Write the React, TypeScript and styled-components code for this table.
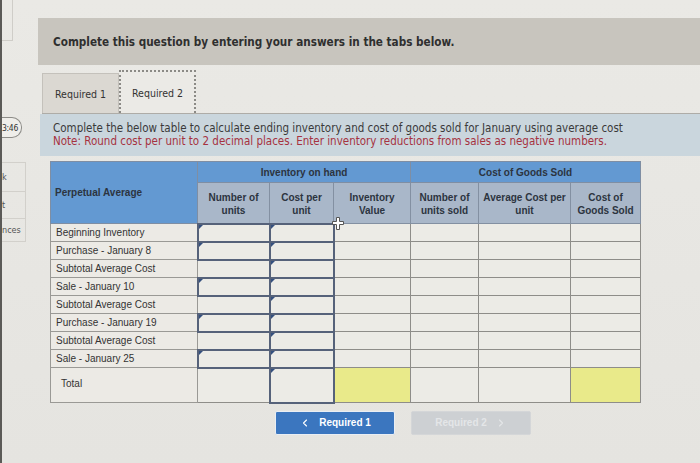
import React from "react";
import styled, { createGlobalStyle } from "styled-components";
import { ChevronLeft, ChevronRight } from "lucide-react";

const GlobalStyle = createGlobalStyle`
  html, body {
    margin: 0;
    padding: 0;
    background: #e8e7e3;
  }
  body {
    font-family: "DejaVu Sans Condensed", "DejaVu Sans", sans-serif;
    color: #333;
  }
`;

const Page = styled.div`
  width: 700px;
  height: 463px;
  display: flex;
  overflow: hidden;
  background: linear-gradient(180deg, #eae9e5 0%, #e5e4e0 100%);
`;

const Sidebar = styled.div`
  width: 38px;
  flex-shrink: 0;
  display: flex;
  flex-direction: column;
  border-left: 2px solid #5b5a57;
  box-sizing: border-box;
`;

const TopStub = styled.div`
  width: 10px;
  height: 40px;
  border: 1px solid #cfcdc8;
  border-left: none;
  border-top: none;
`;

const TimeBadge = styled.div`
  margin-top: 76px;
  width: 20px;
  height: 21px;
  border: 1px solid #8d8c88;
  border-left: none;
  border-radius: 0 10px 10px 0;
  display: flex;
  align-items: center;
  justify-content: flex-end;
  padding-right: 3px;
  box-sizing: border-box;
  font-size: 8.5px;
  letter-spacing: -0.3px;
  color: #333;
  background: #efeeea;
`;

const NavList = styled.div`
  margin-top: 24px;
  width: 23px;
  border: 1px solid #d2d0cb;
  border-left: none;
  display: flex;
  flex-direction: column;
`;

const NavItem = styled.div<{ $h: number }>`
  height: ${(p) => p.$h}px;
  display: flex;
  align-items: center;
  font-size: 9px;
  color: #555;
  white-space: nowrap;
  border-top: 1px solid #d2d0cb;
  &:first-child {
    border-top: none;
  }
`;

const Main = styled.div`
  flex: 1;
  display: flex;
  flex-direction: column;
  padding-top: 18px;
  position: relative;
`;

const TitleBar = styled.div`
  height: 47px;
  background: #c8c5be;
  display: flex;
  align-items: center;
  padding-left: 15px;
  font-weight: bold;
  font-size: 11.65px;
  color: #2f2f2f;
`;

const TabStrip = styled.div`
  margin-top: 5px;
  margin-left: 4px;
  display: flex;
  align-items: flex-end;
  height: 43px;
  border-bottom: 1px solid #aeaca7;
`;

const Tab = styled.div<{ $active?: boolean }>`
  height: ${(p) => (p.$active ? "43px" : "40px")};
  padding: 0 ${(p) => (p.$active ? "11px" : "12px")};
  display: flex;
  align-items: center;
  font-size: 10.5px;
  color: #333;
  box-sizing: border-box;
  background: ${(p) => (p.$active ? "#ebeae6" : "#dbd8d2")};
  border: ${(p) => (p.$active ? "2px dotted #8b8a86" : "1px solid #c4c1bb")};
  border-bottom: none;
`;

const Instructions = styled.div`
  margin-left: 2px;
  height: 42px;
  background: #cad6dd;
  padding: 8px 0 0 13px;
  box-sizing: border-box;
  font-size: 11.5px;
  line-height: 13px;
  color: #3a3a3a;
  white-space: nowrap;
`;

const Note = styled.div`
  color: #a6323f;
`;

const Table = styled.table`
  margin-top: 5px;
  margin-left: 12px;
  border-collapse: collapse;
  table-layout: fixed;
  width: 590px;
  font-family: "Liberation Sans", Arial, sans-serif;
  font-size: 10px;
`;

const GroupHead = styled.th`
  height: 20px;
  background: #6399d2;
  color: #2c3440;
  font-weight: bold;
  border: 1px solid #7f8ea3;
  padding: 0;
`;

const CornerHead = styled.th`
  background: #6399d2;
  color: #2c3440;
  text-align: left;
  padding: 0 0 0 4px;
  font-weight: bold;
  border: 1px solid #7f8ea3;
`;

const SubHead = styled.th`
  height: 41px;
  background: #a9b7c9;
  color: #2c3440;
  font-weight: bold;
  line-height: 13px;
  border: 1px solid #8390a2;
  padding: 2px 0 0;
  box-sizing: border-box;
`;

const Row = styled.tr<{ $tall?: boolean }>`
  height: ${(p) => (p.$tall ? "35px" : "18px")};
`;

const Label = styled.td<{ $tall?: boolean }>`
  background: #eceae5;
  border: 1px solid #9a9995;
  padding: ${(p) => (p.$tall ? "0 0 4px 10px" : "0 0 0 5px")};
  color: #333;
  white-space: nowrap;
`;

const Cell = styled.td<{ $input?: boolean; $yellow?: boolean }>`
  position: relative;
  background: ${(p) => (p.$yellow ? "#e9ea8a" : "#ecebe6")};
  border: ${(p) => (p.$input ? "2px solid #56627a" : "1px solid #8e8d89")};
  padding: 0;
  &::before {
    content: "";
    display: ${(p) => (p.$input ? "block" : "none")};
    position: absolute;
    left: 0;
    top: 0;
    border-top: 4px solid #35507e;
    border-right: 4px solid transparent;
  }
`;

const Buttons = styled.div`
  margin-top: 7px;
  padding-left: 237px;
  display: flex;
  gap: 16px;
`;

const NavButton = styled.div<{ $disabled?: boolean }>`
  width: 118px;
  height: 22px;
  display: flex;
  align-items: center;
  justify-content: center;
  gap: 8px;
  font-family: "Liberation Sans", Arial, sans-serif;
  font-weight: bold;
  font-size: 10px;
  color: ${(p) => (p.$disabled ? "#e4e6e8" : "#ffffff")};
  background: ${(p) => (p.$disabled ? "#cdd0d3" : "#3b76bf")};
  border: 1px solid ${(p) => (p.$disabled ? "#d4d6d8" : "#e9eef4")};
  border-radius: 2px;
`;

const Cursor = styled.svg`
  position: absolute;
  left: 294px;
  top: 217px;
`;

const rows = [
  { label: "Beginning Inventory", units: true },
  { label: "Purchase - January 8", units: true },
  { label: "Subtotal Average Cost", units: false },
  { label: "Sale - January 10", units: true },
  { label: "Subtotal Average Cost", units: false },
  { label: "Purchase - January 19", units: true },
  { label: "Subtotal Average Cost", units: false },
  { label: "Sale - January 25", units: true },
];

export default function App() {
  return (
    <Page>
      <GlobalStyle />
      <Sidebar>
        <TopStub />
        <TimeBadge>3:46</TimeBadge>
        <NavList>
          <NavItem $h={28}>k</NavItem>
          <NavItem $h={26}>t</NavItem>
          <NavItem $h={22}>nces</NavItem>
        </NavList>
      </Sidebar>
      <Main>
        <TitleBar>Complete this question by entering your answers in the tabs below.</TitleBar>
        <TabStrip>
          <Tab>Required 1</Tab>
          <Tab $active>Required 2</Tab>
        </TabStrip>
        <Instructions>
          <div>
            Complete the below table to calculate ending inventory and cost of goods sold for January using average cost
          </div>
          <Note>
            Note: Round cost per unit to 2 decimal places. Enter inventory reductions from sales as negative numbers.
          </Note>
        </Instructions>
        <Table>
          <colgroup>
            <col style={{ width: 147 }} />
            <col style={{ width: 72 }} />
            <col style={{ width: 64 }} />
            <col style={{ width: 77 }} />
            <col style={{ width: 68 }} />
            <col style={{ width: 92 }} />
            <col style={{ width: 70 }} />
          </colgroup>
          <thead>
            <tr>
              <CornerHead rowSpan={2}>Perpetual Average</CornerHead>
              <GroupHead colSpan={3}>Inventory on hand</GroupHead>
              <GroupHead colSpan={3}>Cost of Goods Sold</GroupHead>
            </tr>
            <tr>
              <SubHead>Number of<br />units</SubHead>
              <SubHead>Cost per<br />unit</SubHead>
              <SubHead>Inventory<br />Value</SubHead>
              <SubHead>Number of<br />units sold</SubHead>
              <SubHead>Average Cost per<br />unit</SubHead>
              <SubHead>Cost of<br />Goods Sold</SubHead>
            </tr>
          </thead>
          <tbody>
            {rows.map((r, i) => (
              <Row key={i}>
                <Label>{r.label}</Label>
                <Cell $input={r.units} />
                <Cell $input />
                <Cell />
                <Cell />
                <Cell />
                <Cell />
              </Row>
            ))}
            <Row $tall>
              <Label $tall>Total</Label>
              <Cell />
              <Cell $input />
              <Cell $yellow />
              <Cell />
              <Cell />
              <Cell $yellow />
            </Row>
          </tbody>
        </Table>
        <Buttons>
          <NavButton>
            <ChevronLeft size={12} strokeWidth={2.2} />
            <span>Required 1</span>
          </NavButton>
          <NavButton $disabled>
            <span>Required 2</span>
            <ChevronRight size={12} strokeWidth={2.2} />
          </NavButton>
        </Buttons>
        <Cursor width="12" height="13" viewBox="0 0 12 13">
          <path
            d="M4.5 0.5h3v4h4v3h-4v5h-3v-5h-4v-3h4z"
            fill="#ffffff"
            stroke="#555"
            strokeWidth="1"
          />
        </Cursor>
      </Main>
    </Page>
  );
}
